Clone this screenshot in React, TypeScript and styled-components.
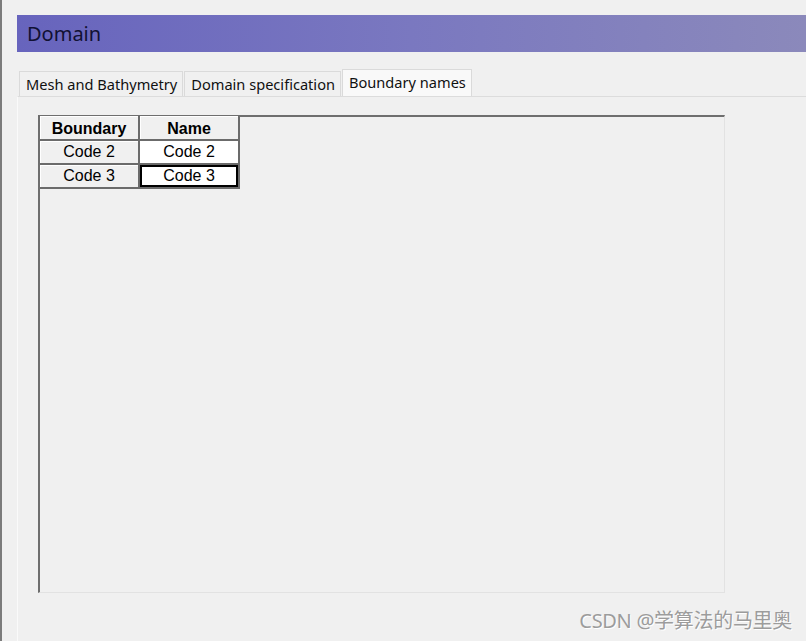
import React from "react";
import styled, { createGlobalStyle } from "styled-components";

const Global = createGlobalStyle`
  html, body { margin: 0; padding: 0; background: #f0f0f0; }
  body { width: 806px; height: 641px; overflow: hidden; }
`;

const Window = styled.div`
  position: relative;
  box-sizing: border-box;
  width: 806px;
  height: 641px;
  border-left: 2px solid #7c7c7c;
  padding: 15px 0 0 15px;
  background: #f0f0f0;
  display: flex;
  flex-direction: column;
`;

const Header = styled.div`
  height: 37px;
  display: flex;
  align-items: center;
  padding-left: 10px;
  background: linear-gradient(90deg, #6764bd 0%, #7a78c0 50%, #8b89bb 100%);
  font-family: "Noto Sans", "Open Sans", sans-serif;
  font-size: 20px;
  color: #111133;
`;

const TabStrip = styled.div`
  display: flex;
  align-items: flex-end;
  margin-top: 17px;
  padding-left: 2px;
  height: 27px;
`;

const Tab = styled.div<{ $active?: boolean }>`
  box-sizing: border-box;
  height: ${(p) => (p.$active ? 27 : 25)}px;
  padding: 0 5px 0 6px;
  display: flex;
  align-items: ${(p) => (p.$active ? "flex-start" : "center")};
  padding-top: ${(p) => (p.$active ? 2 : 0)}px;
  background: ${(p) => (p.$active ? "#f9f9f9" : "#f0f0f0")};
  border: 1px solid #dadada;
  border-bottom: none;
  margin-right: ${(p) => (p.$active ? 0 : 1)}px;
  font-family: "Noto Sans", "Open Sans", sans-serif;
  font-size: 14.6px;
  color: #111;
  white-space: nowrap;
`;

const Pane = styled.div`
  flex: 1;
  border-top: 1px solid #dcdcdc;
  border-left: 1px solid #fafafa;
  padding: 18px 0 0 20px;
`;

const Frame = styled.div`
  box-sizing: border-box;
  width: 687px;
  height: 478px;
  border-top: 2px solid #6e6e6e;
  border-left: 2px solid #6e6e6e;
  border-right: 1px solid #e2e2e2;
  border-bottom: 1px solid #e2e2e2;
  background: #f0f0f0;
`;

const Grid = styled.div`
  display: inline-grid;
  grid-template-columns: 98px 98px;
  grid-template-rows: 23px 22px 22px;
  gap: 2px;
  padding: 0 2px 2px 0;
  margin-top: -1px;
  background: #6b6b6b;
`;

const Cell = styled.div<{ $head?: boolean; $white?: boolean; $selected?: boolean }>`
  box-sizing: border-box;
  display: flex;
  align-items: center;
  justify-content: center;
  font-family: "Liberation Sans", Arial, sans-serif;
  font-size: 16px;
  font-weight: ${(p) => (p.$head ? 700 : 400)};
  color: #000;
  background: ${(p) => (p.$white ? "#ffffff" : "#f0f0f0")};
  box-shadow: ${(p) =>
    p.$selected ? "inset 0 0 0 2px #000" : p.$white ? "none" : "inset 1px 1px 0 #ffffff"};
  padding-top: ${(p) => (p.$head ? 2 : 0)}px;
`;

const Watermark = styled.div`
  position: absolute;
  right: 14px;
  bottom: 7px;
  font-family: "Noto Sans", "Noto Sans CJK SC", sans-serif;
  font-size: 20px;
  letter-spacing: -0.3px;
  color: #9c9c9c;
  text-shadow: 1px 1px 0 #ffffff;
`;

export default function App() {
  return (
    <>
      <Global />
      <Window>
        <Header>Domain</Header>
        <TabStrip>
          <Tab>Mesh and Bathymetry</Tab>
          <Tab>Domain specification</Tab>
          <Tab $active>Boundary names</Tab>
        </TabStrip>
        <Pane>
          <Frame>
            <Grid>
              <Cell $head>Boundary</Cell>
              <Cell $head>Name</Cell>
              <Cell>Code 2</Cell>
              <Cell $white>Code 2</Cell>
              <Cell>Code 3</Cell>
              <Cell $white $selected>Code 3</Cell>
            </Grid>
          </Frame>
        </Pane>
        <Watermark>CSDN @学算法的马里奥</Watermark>
      </Window>
    </>
  );
}
